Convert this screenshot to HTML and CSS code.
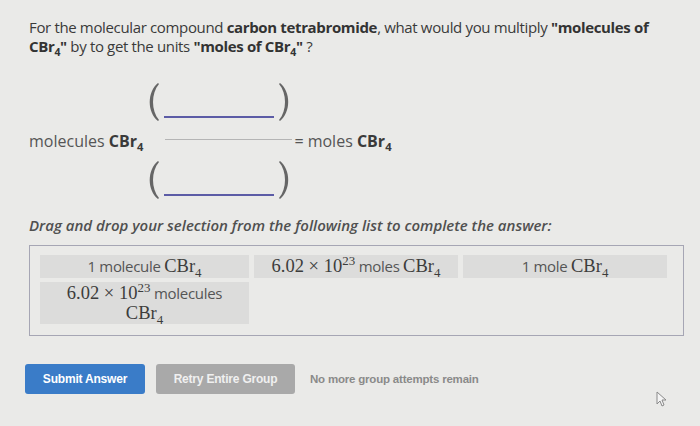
FILE: index.html
```html
<!DOCTYPE html>
<html>
<head lang="en">
    <meta charset="UTF-8">
    <title>Carbon tetrabromide</title>
    <link rel="stylesheet" href="styles.css">
</head>
<body>
    <div id="page">
        <p class="question">
            For the molecular compound <b>carbon tetrabromide</b>, what would you multiply <b>"molecules of<br>CBr<sub>4</sub>"</b> by to get the units <b>"moles of CBr<sub>4</sub>"</b> ?
        </p>

        <div class="equation">
            <span class="label">molecules <b>CBr<sub>4</sub></b></span>
            <div class="fraction">
                <div class="slot">
                    <svg class="paren" width="14" height="40" viewBox="0 0 14 40"><path d="M12 1 C1 10 1 30 12 39 L13 38 C5 29 5 11 13 2 Z"/></svg>
                    <span class="blank"></span>
                    <svg class="paren" width="14" height="40" viewBox="0 0 14 40"><path d="M2 1 C13 10 13 30 2 39 L1 38 C9 29 9 11 1 2 Z"/></svg>
                </div>
                <div class="bar"></div>
                <div class="slot">
                    <svg class="paren" width="14" height="40" viewBox="0 0 14 40"><path d="M12 1 C1 10 1 30 12 39 L13 38 C5 29 5 11 13 2 Z"/></svg>
                    <span class="blank"></span>
                    <svg class="paren" width="14" height="40" viewBox="0 0 14 40"><path d="M2 1 C13 10 13 30 2 39 L1 38 C9 29 9 11 1 2 Z"/></svg>
                </div>
            </div>
            <span class="label">= moles <b>CBr<sub>4</sub></b></span>
        </div>

        <p class="hint">Drag and drop your selection from the following list to complete the answer:</p>

        <div id="choices">
            <div class="item">1 molecule <span class="m">CBr<sub>4</sub></span></div>
            <div class="item"><span class="m">6.02 × 10<sup>23</sup></span> moles <span class="m">CBr<sub>4</sub></span></div>
            <div class="item">1 mole <span class="m">CBr<sub>4</sub></span></div>
            <div class="item tall"><span class="m">6.02 × 10<sup>23</sup></span> molecules<br><span class="m">CBr<sub>4</sub></span></div>
        </div>

        <div class="actions">
            <span class="btn submit">Submit Answer</span>
            <span class="btn retry">Retry Entire Group</span>
            <span class="note">No more group attempts remain</span>
        </div>
    </div>
    <svg id="cursor" width="12" height="16" viewBox="0 0 12 16"><path d="M1 1 L1 13 L4 10 L6 15 L8 14 L6 9 L10 9 Z"/></svg>
</body>
</html>
```

FILE: styles.css
```css
*{
    margin: 0;
    padding: 0;
}
body{
    background: #eaeae8;
    font-family: "Open Sans", "Liberation Sans", sans-serif;
    color: #3a3a3a;
    width: 700px;
    height: 426px;
    overflow: hidden;
    position: relative;
}
#page{
    padding: 18px 17px 0 29px;
}
.question{
    font-size: 15px;
    line-height: 19px;
    letter-spacing: -0.35px;
}
.question b{
    font-weight: 700;
    color: #333;
}
sub, sup{
    font-size: 70%;
    line-height: 0;
}
.equation{
    display: flex;
    align-items: center;
    margin-top: 26px;
    font-size: 16px;
    color: #555;
}
.equation b{
    color: #3a3a3a;
}
.fraction{
    width: 146px;
    margin-left: 3px;
    margin-right: 2px;
}
.slot{
    display: flex;
    align-items: center;
    height: 40px;
}
.paren{
    fill: #666;
}
.blank{
    width: 110px;
    height: 2px;
    background: #5c5ca6;
    margin: 30px 4px 0 4px;
}
.bar{
    height: 1px;
    background: #b5b5b5;
    margin: 17px 0 20px 19px;
}
.hint{
    margin-top: 15px;
    font-size: 15px;
    font-style: italic;
    font-weight: 600;
    color: #505050;
}
#choices{
    margin-top: 10px;
    width: 633px;
    height: 70px;
    border: 1px solid #a6a6b4;
    padding: 9px 10px 10px 10px;
    display: grid;
    grid-template-columns: 209px 204px 204px;
    grid-auto-rows: min-content;
    gap: 4px 5px;
}
.item{
    background: #dcdcdb;
    height: 23px;
    font-size: 15px;
    line-height: 23px;
    color: #555;
    text-align: center;
    letter-spacing: -0.3px;
}
.item.tall{
    height: 42px;
    line-height: 20px;
    padding-top: 1px;
    box-sizing: border-box;
}
.m{
    font-family: "Liberation Serif", "DejaVu Serif", serif;
    font-size: 18.5px;
    color: #3c3c3c;
    letter-spacing: 0;
}
.actions{
    display: flex;
    align-items: center;
    margin-top: 28px;
    margin-left: -4px;
    font-family: "Liberation Sans", Arial, sans-serif;
    font-weight: 700;
    font-size: 12px;
}
.btn{
    height: 30px;
    line-height: 30px;
    border-radius: 3px;
    text-align: center;
    color: #fff;
    letter-spacing: -0.2px;
}
.submit{
    width: 120px;
    background: #3a7cc8;
}
.retry{
    width: 139px;
    margin-left: 11px;
    background: #a9a9a9;
    color: #f0f0f0;
}
.note{
    margin-left: 15px;
    color: #8a8a8a;
    font-size: 11.5px;
    letter-spacing: -0.2px;
}
#cursor{
    position: absolute;
    left: 656px;
    top: 391px;
    fill: #f4f4f4;
    stroke: #8a8a8a;
    stroke-width: 1;
}
```
